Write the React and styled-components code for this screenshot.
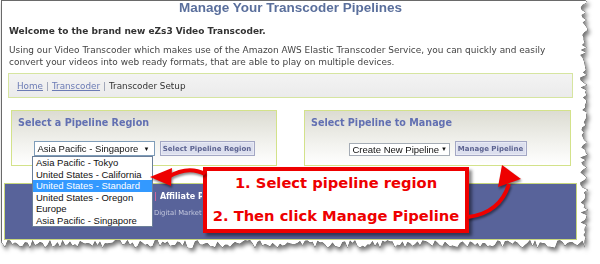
import React from "react";
import styled, { createGlobalStyle } from "styled-components";

const GlobalStyle = createGlobalStyle`
  html, body {
    margin: 0;
    padding: 0;
    background: #ffffff;
  }
  body {
    width: 600px;
    height: 264px;
    overflow: hidden;
    font-family: "DejaVu Sans", Verdana, sans-serif;
  }
`;

// jagged right + bottom edge, like a torn sheet of paper
const tornEdge = (w, h) => {
  let s = 11;
  const rnd = () => {
    s = (s * 9301 + 49297) % 233280;
    return s / 233280;
  };
  const pts = ["0px 0px"];
  for (let y = 0; y < h - 6; y += 2.5) pts.push(`${(w - 9 + rnd() * 8).toFixed(1)}px ${y}px`);
  for (let x = w - 4; x > 0; x -= 2.5) pts.push(`${x}px ${(h - 9 + rnd() * 8).toFixed(1)}px`);
  pts.push(`0px ${h - 8}px`);
  return `polygon(${pts.join(",")})`;
};

const regions = [
  "Asia Pacific - Tokyo",
  "United States - California",
  "United States - Standard",
  "United States - Oregon",
  "Europe",
  "Asia Pacific - Singapore",
];

const Frame = styled.div`
  position: relative;
  width: 600px;
  height: 264px;
  overflow: hidden;
  background: #fff;
`;

const ShadowWrap = styled.div`
  width: 590px;
  height: 249px;
  filter: drop-shadow(0 0 0.6px #222) drop-shadow(0 0 0.5px #333)
    drop-shadow(2px 3px 2px rgba(0, 0, 0, 0.55));
`;

const Paper = styled.div`
  box-sizing: border-box;
  width: 589px;
  height: 249px;
  margin-left: 1px;
  background: #fff;
  border-left: 1px solid #6a6a6a;
  border-top: 1px solid #6a6a6a;
  clip-path: ${tornEdge(588, 249)};
`;

const Content = styled.div`
  width: 573px;
  margin-left: 2px;
`;

const Title = styled.h1`
  margin: 0;
  font-family: "Liberation Sans", Arial, sans-serif;
  font-size: 13.5px;
  line-height: 14px;
  font-weight: bold;
  color: #5a6f9c;
  text-align: center;
`;

const Welcome = styled.p`
  margin: 10px 0 0 5px;
  font-size: 9px;
  line-height: 12px;
  font-weight: bold;
  color: #333;
`;

const Lead = styled.p`
  margin: 8px 0 0 5px;
  font-size: 8.95px;
  line-height: 11.5px;
  color: #444;
  white-space: nowrap;
`;

const Crumbs = styled.div`
  box-sizing: border-box;
  height: 25px;
  margin: 5px 4px 0 4px;
  padding-left: 8px;
  display: flex;
  align-items: center;
  gap: 3px;
  border: 1px solid #d6e5a0;
  background: linear-gradient(#f3f3f3, #ebebeb);
  font-size: 8.8px;
  color: #333;
`;

const CrumbLink = styled.a`
  color: #6b7bb5;
  text-decoration: underline;
`;

const Sep = styled.span`
  color: #8890a8;
`;

const Panels = styled.div`
  display: flex;
  justify-content: space-between;
  margin: 12px 6px 0 7px;
`;

const Panel = styled.section`
  box-sizing: border-box;
  width: ${(p) => p.$w}px;
  height: 56px;
  padding: 5px 6px 0 6px;
  border: 1px solid #d3e28a;
  background: linear-gradient(#dcdcd2, #f2f2ee 60%, #ffffff);
`;

const PanelTitle = styled.h2`
  margin: 0;
  font-size: 9.6px;
  line-height: 13px;
  font-weight: bold;
  color: #6270b2;
`;

const Controls = styled.div`
  display: flex;
  justify-content: center;
  align-items: flex-start;
  gap: 5px;
  margin-top: 12px;
`;

const Select = styled.div`
  box-sizing: border-box;
  width: ${(p) => p.$w}px;
  height: ${(p) => (p.$open ? 15 : 13)}px;
  margin-top: ${(p) => (p.$open ? 0 : 1.5)}px;
  padding: 0 4px 0 3px;
  display: flex;
  align-items: center;
  justify-content: space-between;
  gap: 2px;
  white-space: nowrap;
  border: 1px solid ${(p) => (p.$open ? "#7f9db9" : "#a5acb5")};
  background: #fff;
  font-family: "Liberation Sans", Arial, sans-serif;
  font-size: 9.5px;
  color: #111;
`;

const Caret = styled.span`
  font-size: 6px;
  color: #111;
`;

const Button = styled.button`
  box-sizing: border-box;
  width: ${(p) => p.$w}px;
  height: 15px;
  padding: 0;
  white-space: nowrap;
  border: 1px solid #a3a7c4;
  outline: 1px solid #e8eaf4;
  outline-offset: -2px;
  background: #dcdfee;
  font-family: "DejaVu Sans", Verdana, sans-serif;
  font-size: 7px;
  font-weight: bold;
  color: #5b6290;
`;

const Footer = styled.footer`
  box-sizing: border-box;
  height: 57px;
  margin-top: 17px;
  padding: 7px 0 0 149px;
  border: 1px solid #c7d67c;
  background: #58639a;
`;

const FooterCol = styled.div`
  width: 48px;
  overflow: hidden;
  white-space: nowrap;
`;

const FooterLinks = styled.div`
  font-size: 8px;
  line-height: 12px;
  font-weight: bold;
  color: #fff;
`;

const Pipe = styled.span`
  color: #d7689e;
  margin-right: 3px;
`;

const FooterNote = styled.div`
  margin-top: 6px;
  font-size: 6.8px;
  color: #c4c8de;
`;

const DropList = styled.ul`
  position: absolute;
  left: 32px;
  top: 156px;
  width: 121px;
  margin: 0;
  padding: 0;
  list-style: none;
  box-sizing: border-box;
  border: 1px solid #6b7f99;
  background: #fff;
  font-family: "Liberation Sans", Arial, sans-serif;
  font-size: 9.5px;
`;

const Option = styled.li`
  height: 11.5px;
  line-height: 11.5px;
  padding-left: 3px;
  white-space: nowrap;
  color: ${(p) => (p.$active ? "#fff" : "#111")};
  background: ${(p) => (p.$active ? "#3399ff" : "transparent")};
`;

const Callout = styled.div`
  position: absolute;
  left: 203px;
  top: 167px;
  box-sizing: border-box;
  width: 266px;
  height: 66px;
  display: flex;
  flex-direction: column;
  justify-content: space-between;
  align-items: center;
  padding: 3px 0 4px;
  border: 4px solid #ee0000;
  background: #fff;
  box-shadow: 3px 3px 3px rgba(0, 0, 0, 0.45);
  font-size: 14.7px;
  line-height: 18px;
  font-weight: bold;
  white-space: nowrap;
  color: #ee0000;
`;

const Arrows = styled.svg`
  position: absolute;
  left: 0;
  top: 0;
  pointer-events: none;
  filter: drop-shadow(1.5px 2px 1.2px rgba(0, 0, 0, 0.45));
`;

export default function App() {
  return (
    <>
      <GlobalStyle />
      <Frame>
        <ShadowWrap>
          <Paper>
            <Content>
              <Title>Manage Your Transcoder Pipelines</Title>
              <Welcome>Welcome to the brand new eZs3 Video Transcoder.</Welcome>
              <Lead>
                Using our Video Transcoder which makes use of the Amazon AWS Elastic Transcoder
                Service, you can quickly and easily
                <br />
                convert your videos into web ready formats, that are able to play on multiple
                devices.
              </Lead>
              <Crumbs>
                <CrumbLink>Home</CrumbLink>
                <Sep>|</Sep>
                <CrumbLink>Transcoder</CrumbLink>
                <Sep>|</Sep>
                <span>Transcoder Setup</span>
              </Crumbs>
              <Panels>
                <Panel $w={266}>
                  <PanelTitle>Select a Pipeline Region</PanelTitle>
                  <Controls>
                    <Select $w={121} $open>
                      Asia Pacific - Singapore <Caret>▼</Caret>
                    </Select>
                    <Button $w={95}>Select Pipeline Region</Button>
                  </Controls>
                </Panel>
                <Panel $w={267}>
                  <PanelTitle>Select Pipeline to Manage</PanelTitle>
                  <Controls>
                    <Select $w={101}>
                      Create New Pipeline <Caret>▼</Caret>
                    </Select>
                    <Button $w={72}>Manage Pipeline</Button>
                  </Controls>
                </Panel>
              </Panels>
              <Footer>
                <FooterCol>
                  <FooterLinks>
                    <Pipe>|</Pipe>Affiliate Program
                  </FooterLinks>
                  <FooterNote>Digital Marketing</FooterNote>
                </FooterCol>
              </Footer>
            </Content>
          </Paper>
        </ShadowWrap>

        <DropList>
          {regions.map((r) => (
            <Option key={r} $active={r === "United States - Standard"}>
              {r}
            </Option>
          ))}
        </DropList>

        <Callout>
          <span>1. Select pipeline region</span>
          <span>2. Then click Manage Pipeline</span>
        </Callout>

        <Arrows width="600" height="264" viewBox="0 0 600 264">
          <g fill="#ee0000">
            <path d="M205 174 Q188 165 168 177" fill="none" stroke="#ee0000" strokeWidth="4" />
            <polygon points="150,177 172,168 171,186" />
            <path d="M468 217 Q500 213 509 184" fill="none" stroke="#ee0000" strokeWidth="4" />
            <polygon points="502,165 521,179 498,187" />
          </g>
        </Arrows>
      </Frame>
    </>
  );
}
